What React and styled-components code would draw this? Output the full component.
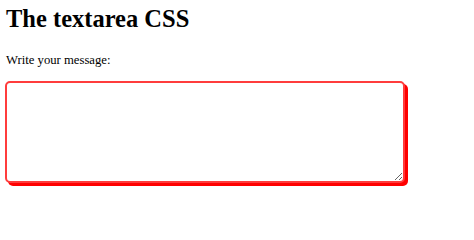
import React from "react";
import styled, { createGlobalStyle } from "styled-components";

const GlobalStyle = createGlobalStyle`
  html, body {
    margin: 0;
    padding: 0;
    background: #ffffff;
  }
  body {
    font-family: "Liberation Serif", "Times New Roman", serif;
    color: #000000;
  }
`;

const Page = styled.div`
  display: flex;
  flex-direction: column;
  align-items: flex-start;
  padding: 5px 6px;
`;

const Heading = styled.h1`
  margin: 0;
  font-size: 24.5px;
  font-weight: 700;
  line-height: 28px;
`;

const Label = styled.p`
  margin: 20px 0 0;
  font-size: 12.7px;
  line-height: 14px;
`;

const MessageBox = styled.textarea`
  appearance: none;
  box-sizing: border-box;
  width: 400px;
  height: 102px;
  margin: 14px 0 0 -1px;
  border: 2px solid #ff3c3c;
  border-radius: 5px;
  box-shadow: 3px 3px 0 #ff0000;
  outline: none;
  background: #ffffff;
  font-family: inherit;
`;

const App = () => {
  return (
    <>
      <GlobalStyle />
      <Page>
        <Heading>The textarea CSS</Heading>
        <Label>Write your message:</Label>
        <MessageBox />
      </Page>
    </>
  );
};

export default App;
